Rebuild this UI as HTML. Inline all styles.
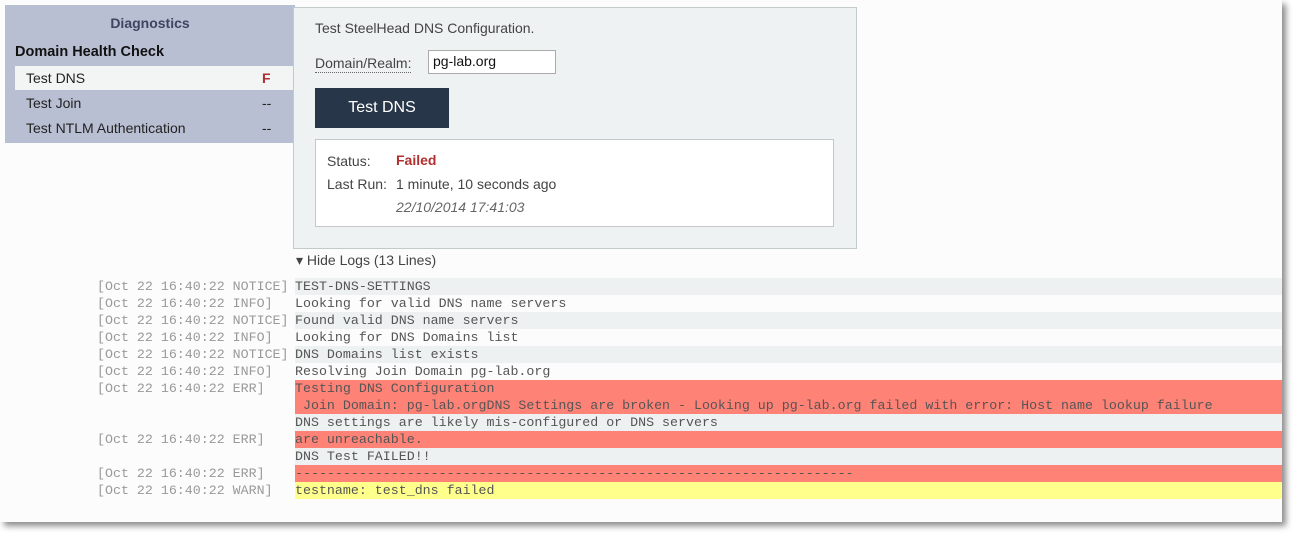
<!DOCTYPE html>
<html><head><meta charset="utf-8"><style>
body{margin:0;width:1298px;height:542px;background:#fff;position:relative;overflow:hidden;font-family:"Liberation Sans",sans-serif;}
.page{position:absolute;left:0;top:0;width:1282px;height:522px;background:#fcfcfc;box-shadow:4px 4px 6px rgba(0,0,0,.45);}
.side{position:absolute;left:5px;top:5px;width:290px;height:138px;background:#b9bfd2;}
.side .h{position:absolute;left:0;width:290px;top:10px;text-align:center;font-weight:bold;font-size:14px;color:#3d4560;}
.side .g{position:absolute;left:10px;top:39px;font-weight:bold;font-size:14.5px;color:#111;}
.row{position:absolute;left:10px;width:280px;height:24px;font-size:14px;color:#222;line-height:24px;}
.row span{position:absolute;left:11px}
.row b{position:absolute;left:247px;font-weight:normal}
.panel{position:absolute;left:293px;top:7px;width:562px;height:240px;background:#eef2f2;border:1px solid #c2cacc;}
.abs{position:absolute;font-size:14px;color:#444;}
.input{position:absolute;left:134px;top:42px;width:128px;height:24px;background:#fff;border:1px solid #aaa;box-sizing:border-box;font-size:14px;color:#111;padding:2px 4px;}
.btn{position:absolute;left:21px;top:80px;width:134px;height:40px;background:#283649;color:#fff;font-size:16px;text-align:center;line-height:40px;}
.stat{position:absolute;left:21px;top:131px;width:519px;height:88px;background:#fff;border:1px solid #c2c8cc;box-sizing:border-box;}
.log{position:absolute;left:0;width:1282px;height:17px;font-family:"Liberation Mono",monospace;font-size:13.3px;line-height:17px;}
.log .t{position:absolute;left:97px;color:#999;}
.log .m{position:absolute;left:295px;right:0;top:0;bottom:0;color:#555;white-space:pre;}
.gy .m{background:#eef1f1}.rd .m{background:#ff8277}.yl .m{background:#ffff8c}
</style></head><body>
<div class="page">
<div class="side">
 <div class="h">Diagnostics</div>
 <div class="g">Domain Health Check</div>
 <div class="row" style="top:61px;background:#f3f4f4"><span>Test DNS</span><b style="color:#b03030;font-weight:bold">F</b></div>
 <div class="row" style="top:86px"><span>Test Join</span><b>--</b></div>
 <div class="row" style="top:111px"><span>Test NTLM Authentication</span><b>--</b></div>
</div>
<div class="panel">
 <div class="abs" style="left:21px;top:12px">Test SteelHead DNS Configuration.</div>
 <div class="abs" style="left:21px;top:47px;border-bottom:1px dotted #666;line-height:17px">Domain/Realm:</div>
 <div class="input">pg-lab.org</div>
 <div class="btn">Test DNS</div>
 <div class="stat">
  <div class="abs" style="left:11px;top:13px">Status:</div>
  <div class="abs" style="left:80px;top:12px;color:#b03030;font-weight:bold">Failed</div>
  <div class="abs" style="left:11px;top:36px">Last Run:</div>
  <div class="abs" style="left:80px;top:36px">1 minute, 10 seconds ago</div>
  <div class="abs" style="left:80px;top:59px;font-style:italic;color:#666">22/10/2014 17:41:03</div>
 </div>
</div>
<div class="abs" style="left:296px;top:252px;color:#444">▾ Hide Logs (13 Lines)</div>
<div class="log gy" style="top:278px"><span class="t">[Oct 22 16:40:22 NOTICE]</span><div class="m">TEST-DNS-SETTINGS</div></div>
<div class="log" style="top:295px"><span class="t">[Oct 22 16:40:22 INFO]</span><div class="m">Looking for valid DNS name servers</div></div>
<div class="log gy" style="top:312px"><span class="t">[Oct 22 16:40:22 NOTICE]</span><div class="m">Found valid DNS name servers</div></div>
<div class="log" style="top:329px"><span class="t">[Oct 22 16:40:22 INFO]</span><div class="m">Looking for DNS Domains list</div></div>
<div class="log gy" style="top:346px"><span class="t">[Oct 22 16:40:22 NOTICE]</span><div class="m">DNS Domains list exists</div></div>
<div class="log" style="top:363px"><span class="t">[Oct 22 16:40:22 INFO]</span><div class="m">Resolving Join Domain pg-lab.org</div></div>
<div class="log rd" style="top:380px;height:34px"><span class="t">[Oct 22 16:40:22 ERR]</span><div class="m">Testing DNS Configuration
 Join Domain: pg-lab.orgDNS Settings are broken - Looking up pg-lab.org failed with error: Host name lookup failure</div></div>
<div class="log gy" style="top:414px"><div class="m">DNS settings are likely mis-configured or DNS servers</div></div>
<div class="log rd" style="top:431px"><span class="t">[Oct 22 16:40:22 ERR]</span><div class="m">are unreachable.</div></div>
<div class="log gy" style="top:448px"><div class="m">DNS Test FAILED!!</div></div>
<div class="log rd" style="top:465px"><span class="t">[Oct 22 16:40:22 ERR]</span><div class="m">----------------------------------------------------------------------</div></div>
<div class="log yl" style="top:482px"><span class="t">[Oct 22 16:40:22 WARN]</span><div class="m">testname: test_dns failed</div></div>
</div>
</body></html>
